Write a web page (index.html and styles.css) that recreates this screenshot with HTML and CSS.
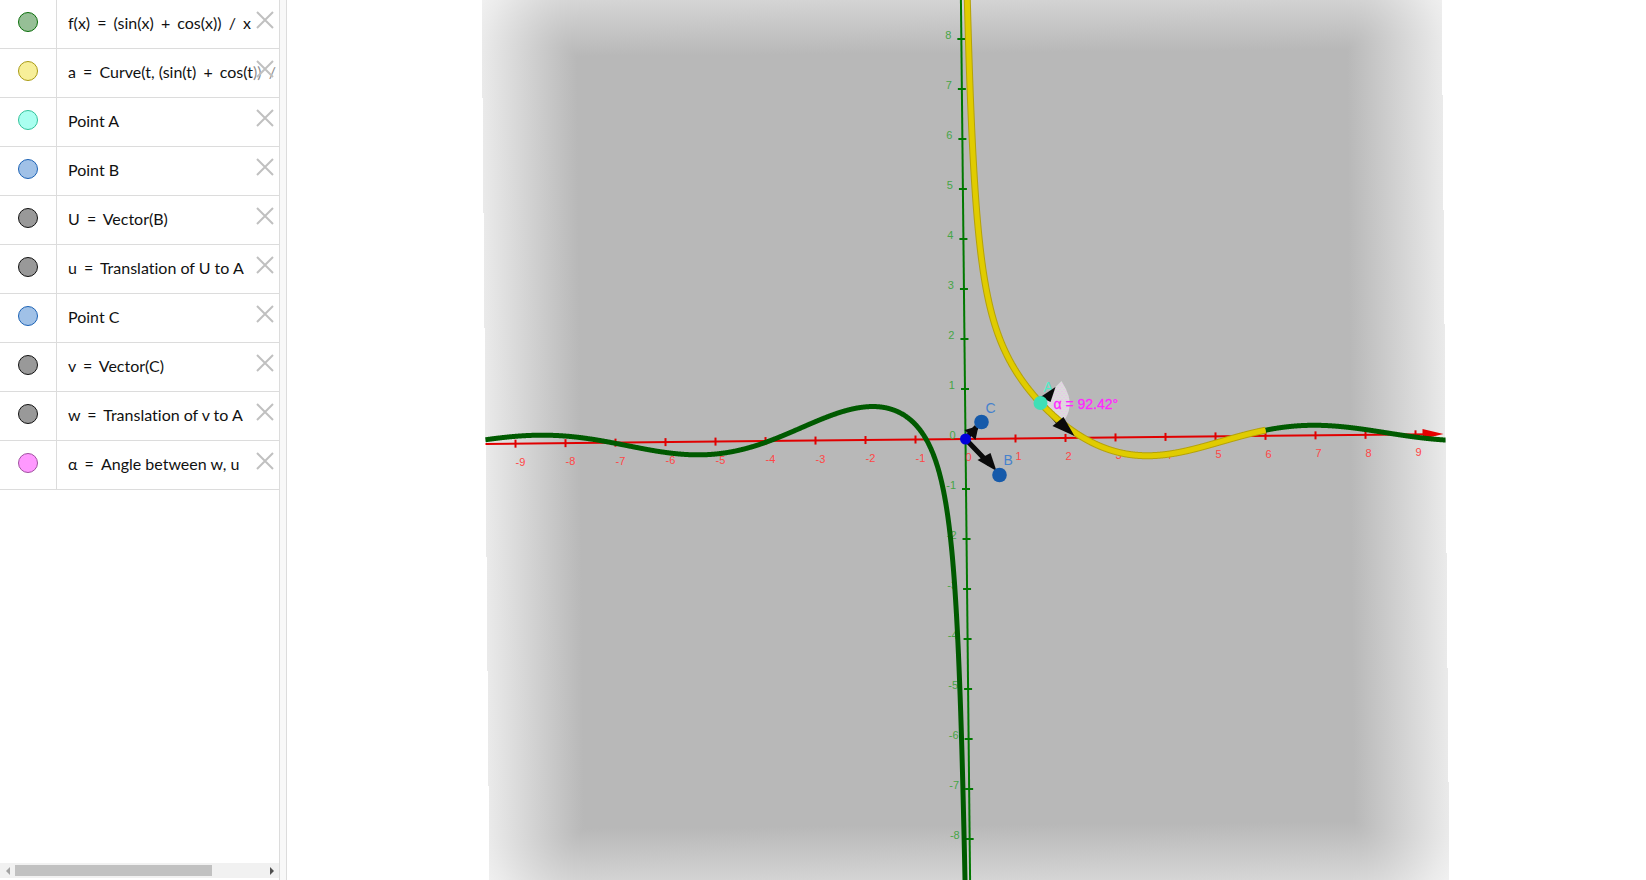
FILE: index.html
```html
<!DOCTYPE html>
<html lang="en">
<head>
  <meta charset="UTF-8" />
  <meta name="viewport" content="width=device-width, initial-scale=1.0" />
  <title>Angle between vectors</title>
  <link rel="stylesheet" href="styles.css">
</head>
<body>
  <div class="app">
    <aside class="algebra">
      <ul class="rows" id="rows"></ul>
      <div class="scrollbar">
        <button class="arrow left" aria-label="Scroll left"></button>
        <div class="track"><div class="thumb"></div></div>
        <button class="arrow right" aria-label="Scroll right"></button>
      </div>
    </aside>
    <div class="splitter"></div>
    <main class="graphics">
      <svg class="view" viewBox="-679 -440 1360 880" preserveAspectRatio="xMidYMid slice" role="img" aria-label="3D graphics view">
        <defs>
          <linearGradient id="fadeL" x1="1" y1="0" x2="0" y2="0"><stop offset="0" stop-color="#b8b8b8"/><stop offset="1" stop-color="#eaeaea"/></linearGradient>
          <linearGradient id="fadeR" x1="0" y1="0" x2="1" y2="0"><stop offset="0" stop-color="#b8b8b8"/><stop offset="1" stop-color="#eaeaea"/></linearGradient>
          <linearGradient id="fadeT" x1="0" y1="1" x2="0" y2="0"><stop offset="0" stop-color="#b8b8b8"/><stop offset="1" stop-color="#eaeaea"/></linearGradient>
          <linearGradient id="fadeB" x1="0" y1="0" x2="0" y2="1"><stop offset="0" stop-color="#b8b8b8"/><stop offset="1" stop-color="#eaeaea"/></linearGradient>
          <radialGradient id="corner" gradientUnits="userSpaceOnUse" cx="0" cy="0" r="114">
            <stop offset="0" stop-color="#b8b8b8"/><stop offset="0.83" stop-color="#eaeaea"/><stop offset="1" stop-color="#f2f2f2"/>
          </radialGradient>
          <pattern id="dots" width="4" height="4" patternUnits="userSpaceOnUse">
            <rect width="4" height="4" fill="#dcdcdc"/>
            <rect width="1" height="1" fill="#f0b4f0"/><rect x="2" y="2" width="1" height="1" fill="#f0b4f0"/>
          </pattern>
        </defs>

        <!-- xy plane, fading out at the border -->
        <g transform="translate(0 -1) rotate(-0.5)" shape-rendering="crispEdges">
          <rect x="-386" y="-387" width="772" height="774" fill="#b8b8b8"/>
          <rect x="-480" y="-387" width="95" height="774" fill="url(#fadeL)"/>
          <rect x="385" y="-387" width="95" height="774" fill="url(#fadeR)"/>
          <rect x="-386" y="-482" width="772" height="96" fill="url(#fadeT)"/>
          <rect x="-386" y="386" width="772" height="96" fill="url(#fadeB)"/>
          <rect x="-95" y="-95" width="96" height="96" transform="translate(-385 -386)" fill="url(#corner)"/>
          <rect x="-1" y="-95" width="96" height="96" transform="translate(385 -386)" fill="url(#corner)"/>
          <rect x="-95" y="-1" width="96" height="96" transform="translate(-385 386)" fill="url(#corner)"/>
          <rect x="-1" y="-1" width="96" height="96" transform="translate(385 386)" fill="url(#corner)"/>
        </g>

        <g id="axes"></g>
        <path id="graphLeft" class="fn"/>
        <path id="graphRight" class="fn"/>

        <g transform="translate(0 -1)">
          <text class="name point-a" x="78" y="-47">A</text>
          <!-- angle sector and the vectors at A -->
          <path d="M75 -37L96 -58Q106 -42 104 -32Q103 -24 98 -18Z" fill="url(#dots)"/>
          <path d="M90 -52L75 -42L85 -37Z" fill="#0a0a0a"/>
          <path class="shaft" d="M75 -37L98 -11"/>
        </g>
        <path id="curveEdge" class="curve-edge"/>
        <path id="curve" class="curve"/>
        <g transform="translate(0 -1)">
          <path d="M87 -13L98 -22L109 -3Z" fill="#0a0a0a"/>
          <circle cx="75" cy="-36" r="7" fill="#3fdfb6"/>
          <text class="angle" x="88" y="-30">α = 92.42°</text>
          <!-- vectors from the origin -->
          <path class="shaft" d="M0 0L11 -12M0 0L24 25"/>
          <path d="M13 -13L-1 -9L10 1Z" fill="#0a0a0a"/>
          <path d="M12 21L25 14L31 32Z" fill="#0a0a0a"/>
          <circle cx="0" cy="0" r="5.5" fill="#0000dc"/>
          <circle cx="16" cy="-17" r="7.3" fill="#165aaa"/>
          <circle cx="34" cy="36" r="7.3" fill="#165aaa"/>
          <text class="name" x="20" y="-26">C</text>
          <text class="name" x="38" y="26">B</text>
        </g>
      </svg>
    </main>
  </div>

  <script>
    const items = [
      { text: "f(x) = (sin(x) + cos(x)) / x", color: "green" },
      { text: "a = Curve(t, (sin(t) + cos(t)) /", color: "yellow" },
      { text: "Point A", color: "mint" },
      { text: "Point B", color: "blue" },
      { text: "U = Vector(B)", color: "black" },
      { text: "u = Translation of U to A", color: "black" },
      { text: "Point C", color: "blue" },
      { text: "v = Vector(C)", color: "black" },
      { text: "w = Translation of v to A", color: "black" },
      { text: "α = Angle between w, u", color: "magenta" }
    ];
    // operators get a bit of air on both sides
    const math = s => s.replace(/[=+\/]/g, op => `<span class="op">${op}</span>`);
    document.getElementById("rows").innerHTML = items.map(i => `
      <li class="row">
        <div class="marker"><button class="dot ${i.color}" aria-label="Show or hide"></button></div>
        <div class="definition">${math(i.text)}</div>
        <button class="close" aria-label="Delete"><svg viewBox="0 0 24 24"><path d="M4 4L20 20M20 4L4 20"/></svg></button>
      </li>`).join("");

    // 50px per unit, view turned slightly
    const UNIT = 50, SKEW = 0.52;
    const f = x => (Math.sin(x) + Math.cos(x)) / x;
    const px = (x, y) => UNIT * x - SKEW * y;
    const py = (x, y) => -1 - SKEW * x - UNIT * y;

    function plot(from, to) {
      const pts = [];
      const n = 1200;
      for (let i = 0; i <= n; i++) {
        const x = from + (to - from) * i / n;
        const y = f(x);
        if (Math.abs(y) > 10) continue;
        pts.push(px(x, y).toFixed(2) + " " + py(x, y).toFixed(2));
      }
      return "M" + pts.join("L");
    }
    document.getElementById("graphLeft").setAttribute("d", plot(-9.6, -0.05));
    document.getElementById("graphRight").setAttribute("d", plot(6, 9.6));
    document.getElementById("curve").setAttribute("d", plot(0.05, 6));
    document.getElementById("curveEdge").setAttribute("d", plot(0.05, 6));

    let axes = `<line class="y-axis" x1="${px(0, 9)}" y1="${py(0, 9)}" x2="${px(0, -9)}" y2="${py(0, -9)}"/>`;
    axes += `<line class="x-axis" x1="${px(-9.6, 0)}" y1="${py(-9.6, 0)}" x2="${px(9.3, 0)}" y2="${py(9.3, 0)}"/>`;
    for (let k = -9; k <= 9; k++) {
      const x = px(k, 0), y = py(k, 0);
      if (k) axes += `<line class="x-axis" x1="${x}" y1="${y - 4}" x2="${x}" y2="${y + 4}"/>`;
      axes += `<text class="x-label" x="${x}" y="${y + 22}">${k}</text>`;
      if (Math.abs(k) < 9) {
        const u = px(0, k), v = py(0, k);
        if (k) axes += `<line class="y-axis" x1="${u - 4}" y1="${v}" x2="${u + 4}" y2="${v}"/>`;
        axes += `<text class="y-label" x="${u - 10}" y="${v}">${k}</text>`;
      }
    }
    axes += `<path class="tip" d="M457 -11L478 -6L457 -1Z"/>`;
    document.getElementById("axes").innerHTML = axes;
  </script>
</body>
</html>
```
FILE: styles.css
```css
* {
  box-sizing: border-box;
}
body {
  margin: 0;
  background: #fff;
  font-family: Lato, "Open Sans", sans-serif;
}
button {
  border: none;
  padding: 0;
  background: none;
  cursor: pointer;
}
.app {
  display: flex;
  height: 100vh;
}

/* algebra view */
.algebra {
  width: 279px;
  flex: none;
  display: flex;
  flex-direction: column;
  padding-bottom: 2px;
}
.rows {
  flex: 1;
  min-height: 0;
  margin: 0;
  padding: 0;
  list-style: none;
  overflow: hidden;
}
.row {
  position: relative;
  display: flex;
  height: 49px;
  border-bottom: 1px solid #dcdcdc;
}
.marker {
  width: 57px;
  flex: none;
  padding: 12px 18px;
  border-right: 1px solid #dcdcdc;
}
.dot {
  display: block;
  width: 20px;
  height: 20px;
  border: 1px solid;
  border-radius: 50%;
}
.green { background: #96bf96; border-color: #0a6e0a; }
.yellow { background: #f7ef99; border-color: #aa9b14; }
.mint { background: #aafff0; border-color: #32c39b; }
.blue { background: #a0c1e7; border-color: #1c62b5; }
.black { background: #999; border-color: #111; }
.magenta { background: #ff99ff; border-color: #a050a0; }
.definition {
  flex: 1;
  min-width: 0;
  padding-left: 11px;
  line-height: 46px;
  font-size: 16px;
  font-variant-ligatures: none;
  color: #111;
  white-space: nowrap;
  overflow: hidden;
}
.op {
  margin: 0 3px;
}
.close {
  position: absolute;
  top: 8px;
  right: 2px;
  width: 24px;
  height: 24px;
  background: rgba(255, 255, 255, 0.5);
}
.close svg {
  display: block;
  fill: none;
  stroke: #c0c0c0;
  stroke-width: 2;
}
.scrollbar {
  display: flex;
  height: 15px;
  background: #f1f1f1;
}
.arrow {
  width: 15px;
  display: flex;
  align-items: center;
  justify-content: center;
}
.arrow::before {
  content: "";
  border: 4px solid transparent;
}
.left::before {
  border-left: none;
  border-right-color: #a3a3a3;
}
.right::before {
  border-right: none;
  border-left-color: #505050;
}
.track {
  flex: 1;
  padding: 2px 0;
}
.thumb {
  width: 79%;
  height: 11px;
  background: #c1c1c1;
}
.splitter {
  width: 8px;
  flex: none;
  background: #f8f8f8;
  border: solid #dcdcdc;
  border-width: 0 1px;
}

/* graphics view */
.graphics {
  flex: 1;
  min-width: 0;
  overflow: hidden;
}
.view {
  display: block;
  width: 100%;
  height: 100%;
  font-family: "Liberation Sans", sans-serif;
}
.x-axis {
  stroke: #e00000;
  stroke-width: 2;
}
.y-axis {
  stroke: #007800;
  stroke-width: 2;
}
.tip {
  fill: #e60000;
}
.x-label {
  font-size: 11px;
  fill: #ff4646;
}
.y-label {
  font-size: 11px;
  fill: #46a546;
  text-anchor: end;
}
.fn {
  fill: none;
  stroke: #005a00;
  stroke-width: 5;
}
.curve-edge {
  fill: none;
  stroke: #b4a20a;
  stroke-width: 7;
}
.curve {
  fill: none;
  stroke: #e0cc00;
  stroke-width: 5;
}
.shaft {
  fill: none;
  stroke: #0a0a0a;
  stroke-width: 5;
}
.name {
  font-size: 14px;
  fill: #4682cd;
}
.point-a {
  fill: #50ebc8;
}
.angle {
  font-size: 14px;
  fill: #ff28ff;
  stroke: #ff28ff;
  stroke-width: 0.3px;
}
```
